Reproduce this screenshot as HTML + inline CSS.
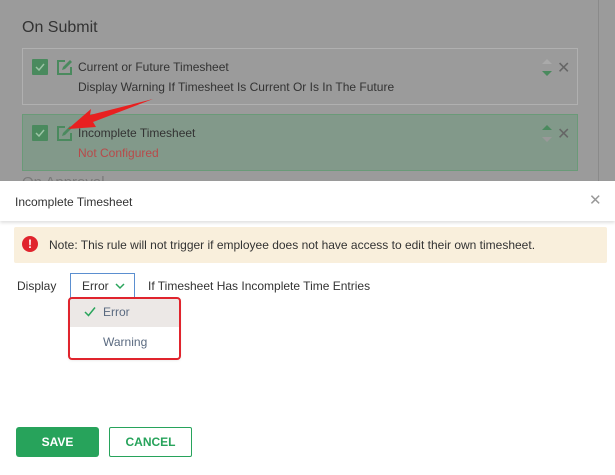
<!DOCTYPE html>
<html><head><meta charset="utf-8">
<style>
*{box-sizing:border-box;margin:0;padding:0}
body{width:615px;height:475px;position:relative;overflow:hidden;font-family:"Liberation Sans",sans-serif;background:#fff}
.ov{position:absolute;left:0;top:0;width:615px;height:181px;background:#9b9b9b}
.panelr{position:absolute;left:598px;top:0;width:1px;height:181px;background:#8a8a8a}
.ab{position:absolute}
.card{position:absolute;left:22px;width:556px;height:57px;border:1px solid #b0b0b0}
.t{position:absolute;left:55px;font-size:12px;color:#333}
.x{position:absolute;left:557px;font-size:16px;color:#666}
</style></head><body>
<div class="ov"></div>
<div class="panelr"></div>
<div class="ab" style="left:22px;top:19px;font-size:16px;color:#333">On Submit</div>
<div class="card" style="top:48px">
 <svg class="ab" style="left:9px;top:10px" width="42" height="17"><rect x="0" y="0" width="16" height="16" rx="1" fill="#4a8a5e"/><path d="M4 8l3 3 5-6" stroke="#9bc4a5" stroke-width="1.5" fill="none"/><path d="M33 2H26V15H39V8" stroke="#4a8a5e" stroke-width="2" fill="none"/><path d="M30 11l1-3 7-7 2 2-7 7z" fill="#4a8a5e"/></svg>
 <div class="t" style="top:11px">Current or Future Timesheet</div>
 <div class="t" style="top:31px">Display Warning If Timesheet Is Current Or Is In The Future</div>
 <svg class="ab" style="left:518px;top:9px" width="12" height="20"><path d="M1 6l5-5 5 5z" fill="#aaa"/><path d="M1 13l5 5 5-5z" fill="#4a8a5e"/></svg>
</div>
<div class="card" style="top:114px;background:#82998a;border-color:#6a9a78">
 <svg class="ab" style="left:9px;top:10px" width="42" height="17"><rect x="0" y="0" width="16" height="16" rx="1" fill="#4a8a5e"/><path d="M4 8l3 3 5-6" stroke="#9bc4a5" stroke-width="1.5" fill="none"/><path d="M33 2H26V15H39V8" stroke="#4a8a5e" stroke-width="2" fill="none"/><path d="M30 11l1-3 7-7 2 2-7 7z" fill="#4a8a5e"/></svg>
 <div class="t" style="top:11px">Incomplete Timesheet</div>
 <div class="t" style="top:31px;color:#b84a4a">Not Configured</div>
 <svg class="ab" style="left:518px;top:9px" width="12" height="20"><path d="M1 6l5-5 5 5z" fill="#4a8a5e"/><path d="M1 13l5 5 5-5z" fill="#999"/></svg>
</div>
<div class="x" style="top:58px">✕</div>
<div class="x" style="top:124px">✕</div>
<svg class="ab" style="left:60px;top:95px" width="100" height="45"><path d="M93 4 L30 20 L31 14 L8 34 L36 32 L33 27 Z" fill="#e82020"/></svg>
<div class="ab" style="left:22px;top:174px;font-size:15px;color:#7a7a7a;height:7px;overflow:hidden;width:100px">On Approval</div>

<div class="ab" style="left:0;top:181px;width:615px;height:40px;background:#fff;box-shadow:0 2px 3px rgba(0,0,0,.12)"></div>
<div class="ab" style="left:15px;top:195px;font-size:12px;color:#333">Incomplete Timesheet</div>
<div class="ab" style="left:589px;top:191px;font-size:15px;color:#999">✕</div>

<div class="ab" style="left:14px;top:227px;width:593px;height:36px;background:#f9efdc;border-radius:2px"></div>
<div class="ab" style="left:22px;top:236px;width:16px;height:16px;border-radius:50%;background:#e0242d;color:#fff;font-size:12px;font-weight:bold;text-align:center;line-height:16px">!</div>
<div class="ab" style="left:49px;top:238px;font-size:12px;color:#333">Note: This rule will not trigger if employee does not have access to edit their own timesheet.</div>

<div class="ab" style="left:17px;top:279px;font-size:12px;color:#333">Display</div>
<div class="ab" style="left:70px;top:273px;width:65px;height:26px;border:1px solid #5b8fd0;border-bottom:none"></div>
<div class="ab" style="left:82px;top:279px;font-size:12px;color:#333">Error</div>
<svg class="ab" style="left:115px;top:282px" width="10" height="8"><path d="M1 2l4 4 4-4" stroke="#2aa55c" stroke-width="1.5" fill="none"/></svg>
<div class="ab" style="left:148px;top:279px;font-size:12px;color:#333">If Timesheet Has Incomplete Time Entries</div>

<div class="ab" style="left:70px;top:299px;width:109px;height:59px;background:#fff;box-shadow:0 1px 4px rgba(0,0,0,.2)"></div>
<div class="ab" style="left:70px;top:299px;width:109px;height:28px;background:#ece8e6"></div>
<div class="ab" style="left:68px;top:297px;width:113px;height:63px;border:2px solid #e0242d;border-radius:4px"></div>
<svg class="ab" style="left:84px;top:306px" width="12" height="12"><path d="M1 6l3.5 3.5 6.5-8" stroke="#2aa55c" stroke-width="1.5" fill="none"/></svg>
<div class="ab" style="left:103px;top:305px;font-size:12px;color:#5a6a80">Error</div>
<div class="ab" style="left:103px;top:335px;font-size:12px;color:#5a6a80">Warning</div>

<div class="ab" style="left:16px;top:427px;width:83px;height:30px;background:#27a35b;border-radius:3px;color:#fff;font-size:12px;font-weight:bold;text-align:center;line-height:30px">SAVE</div>
<div class="ab" style="left:109px;top:427px;width:83px;height:30px;border:1px solid #27a35b;border-radius:2px;color:#27a35b;font-size:12px;font-weight:bold;text-align:center;line-height:28px">CANCEL</div>
</body></html>
